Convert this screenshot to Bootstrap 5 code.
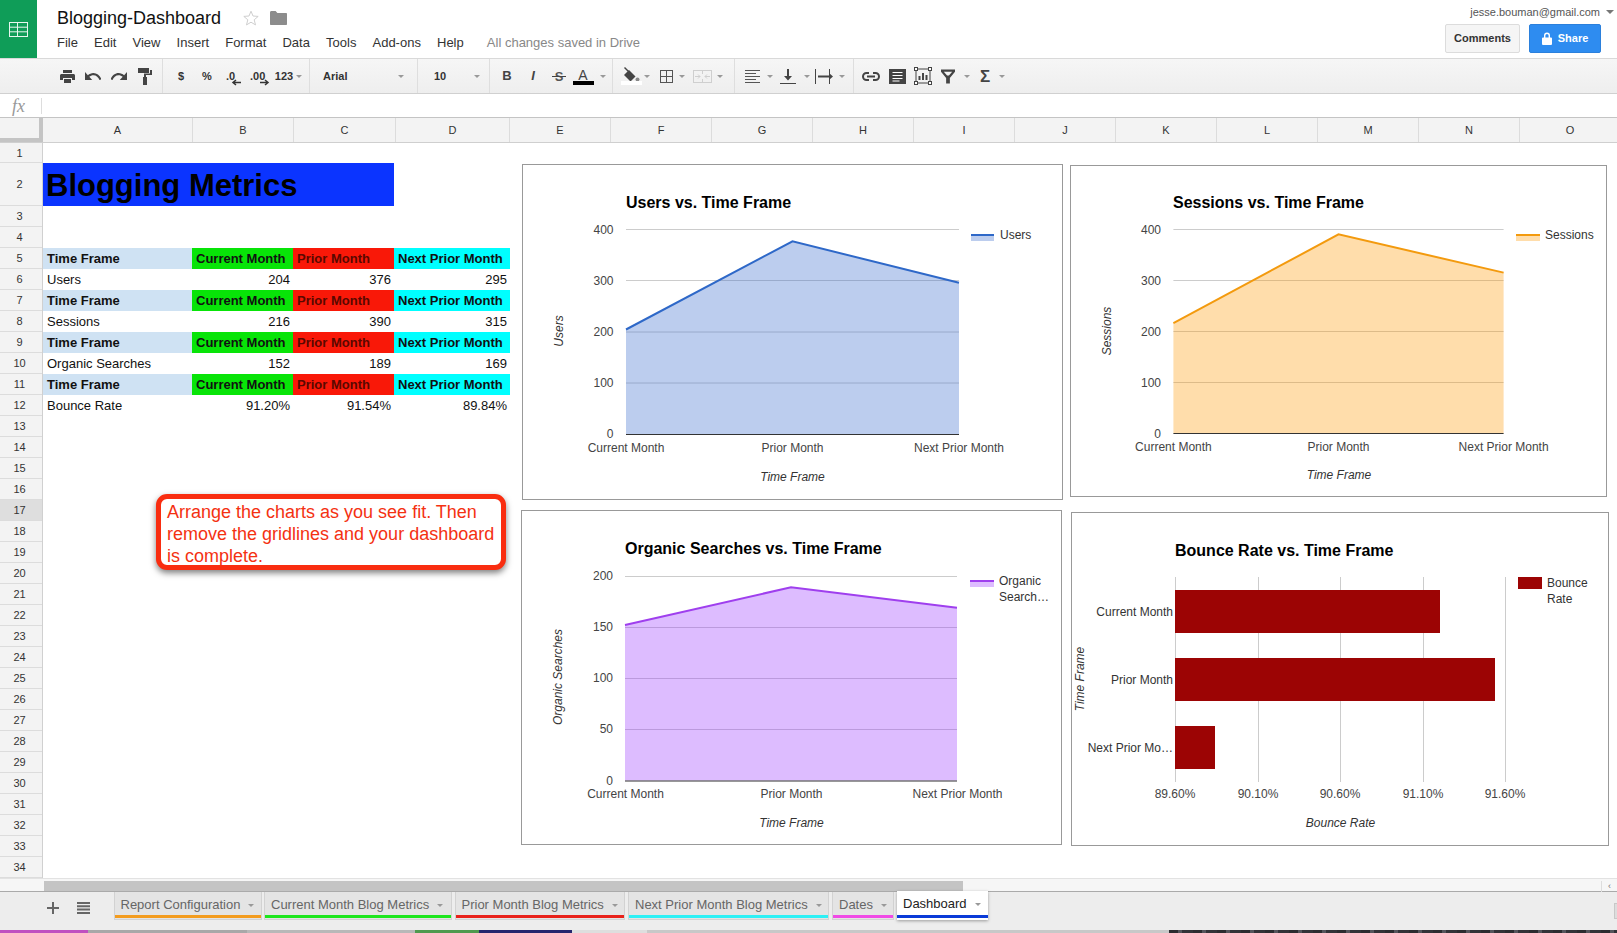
<!DOCTYPE html>
<html lang="en">
<head>
<meta charset="utf-8">
<title>Blogging-Dashboard</title>
<link rel="stylesheet" href="https://cdn.jsdelivr.net/npm/bootstrap@5.3.0/dist/css/bootstrap.min.css">
<style>
html,body{margin:0;height:933px;overflow:hidden}
body{width:1617px;font-family:"Liberation Sans",Arial,sans-serif;color:#222;background:#fff;font-size:13px}
svg{display:block}
svg text{font-family:"Liberation Sans",Arial,sans-serif}

/* title bar */
.app-head{height:58px}
.app-logo{width:37px;height:58px;background:#0f9d58}
.app-titles{padding-left:20px}
.doc-title{font-size:18px;line-height:36px;height:36px;color:#111}
.doc-title-icons{margin-left:22px;gap:11px}
.menu-line{height:14px;line-height:14px;font-size:13px}
.menu-link{padding:0;margin-right:16.1px;color:#333;font-size:13px;line-height:14px}
.save-state{color:#888;margin-left:7px}
.acct-email{height:24px;padding:1px 3px 0 0;font-size:11px;line-height:22px;color:#555}
.acct-caret{display:inline-block;margin-left:6px;vertical-align:2px;border:4px solid transparent;border-top-color:#777;border-bottom:0}
.acct-btns{gap:9px;padding-right:16px}
.act-btn{height:29px;font-size:11px;font-weight:700;padding:0;border-radius:2px;line-height:27px}
.act-btn-c{width:75px;background:#f5f5f5;border:1px solid #dcdcdc;color:#333}
.act-btn-s{width:72px;background:#2e8cf0;border:1px solid #2b80dc;color:#fff;gap:6px}

/* toolbar */
.tool-row{height:36px;background:linear-gradient(#f6f6f6,#eeeeee);border-top:1px solid #d9d9d9;border-bottom:1px solid #d0d0d0;color:#444}
.tg{height:100%;border-right:1px solid #dedede}
.tg1{width:163px;padding-left:54px}
.tg2{width:147px;padding-left:5px}
.tg3{width:108px;padding:0 11px 0 13px}
.tg4{width:72px;padding:0 7px 0 16px}
.tg5{width:123px;padding-left:4px}
.tg6{width:122px;padding-left:4px}
.tg7{width:119px;padding-left:5px}
.tg8{padding-left:4px;border-right:0}
.ti{width:26px;flex:none}
.ti-24{width:24px;flex:none}
.ti-w{width:26px;flex:none}
.tc{width:8px;flex:none;height:100%}
.tc::after{content:"";border:3px solid transparent;border-top-color:#999;border-bottom:0}
.sp-1{margin-left:1px}.sp-2{margin-left:2px}.sp-3{margin-left:3px}.sp-4{margin-left:4px}.sn-1{margin-left:-1px}.sn-2{margin-left:-2px}
.tt{font-size:11px;font-weight:700;color:#333}
.tt-r{font-weight:700;font-size:13px;color:#444;line-height:14px}
.ti-big{font-size:17px;font-weight:700;color:#444;line-height:1}
.ta-bar{width:21px;height:4px;background:#000;margin-top:-1px}
.ta-letter{font-size:14px;line-height:14px;color:#444}
.tf-name{font-size:11px;font-weight:700;color:#333}

/* formula bar */
.fx-row{height:24px;border-bottom:1px solid #c4c4c4}
.fx-mark{width:41px;font-family:"Liberation Serif",serif;font-style:italic;font-size:18px;color:#999;padding-left:12px;line-height:24px}
.fx-sep{width:1px;height:16px;background:#ddd;margin-top:4px}

/* columns */
.col-row{height:25px;background:#f3f3f3;border-bottom:1px solid #cfcfcf;overflow:hidden}
.col-corner{width:43px;flex:none;height:25px;background:#f3f3f3;border-right:4px solid #c4c4c4;border-bottom:5px solid #c4c4c4}
.col-h{flex:none;width:101px;border-right:1px solid #dcdcdc;text-align:center;font-size:11px;line-height:25px;color:#333}
.col-h-a{width:150px}.col-h-c{width:102px}.col-h-d{width:114px}

/* grid */
.sheet-body{height:735px}
.row-rail{width:43px;flex:none;background:#f3f3f3;border-right:1px solid #d0d0d0}
.row-n{height:21px;border-bottom:1px solid #dcdcdc;font-size:11px;color:#333;line-height:20px;text-align:center;padding-right:3px}
.row-n-1{height:20px}.row-n-2{height:43px;line-height:42px}
.row-n-on{background:#dedede}
.sheet-canvas{flex:1;min-width:0}
.sheet-tbl{table-layout:fixed;width:467px;border-collapse:collapse;font-size:13px}
.sheet-tbl td{height:21px;padding:0 3px 0 4px;line-height:20px;overflow:hidden;white-space:nowrap;color:#111}
.sheet-tbl tr.tr-1 td{height:20px}
.sheet-tbl tr.tr-2 td{height:43px}
.cw-a{width:149px}.cw-b{width:101px}.cw-c{width:101px}.cw-d{width:116px}
.sheet-tbl td.cell-title{background:#0b34ff;font-size:31px;font-weight:700;color:#000;padding-top:2px;padding-left:3px}
.cell-tf{background:#cfe2f3;font-weight:700}
.cell-cur{background:#08e408;font-weight:700}
.sheet-tbl td.cell-pri{background:#f91808;font-weight:700;color:#5a0800}
.cell-nxt{background:#0ff;font-weight:700}

/* charts */
.chart-box{position:absolute;background:#fff;border:1px solid #999}
.chart-1{left:479px;top:21px;width:541px;height:336px}
.chart-2{left:1027px;top:22px;width:537px;height:332px}
.chart-3{left:478px;top:367px;width:541px;height:335px}
.chart-4{left:1028px;top:369px;width:538px;height:334px}
.c-title{font-size:16px;font-weight:700;fill:#000}
.c-tick{font-size:12px;fill:#444}
.c-leg{font-size:12px;fill:#333}
.c-ax{font-size:12px;font-style:italic;fill:#333}
.c-grid{stroke:#ccc;stroke-width:1}
.c-base{stroke:#333;stroke-width:1}
.c-end{text-anchor:end}
.c-mid{text-anchor:middle}

/* note */
.note-box{position:absolute;left:113px;top:351px;width:350px;height:76px;background:#fff;border:5px solid #f92d10;border-radius:11px;box-shadow:0 3px 6px rgba(0,0,0,.5);color:#f43112;font-size:18px;line-height:22px;padding:2px 0 0 6px;white-space:nowrap}

/* scroll + tabs */
.scroll-row{height:13px;background:#f6f6f6;border-top:1px solid #e2e2e2;padding:2px 0 0 44px}
.scroll-thumb{width:919px;height:10px;background:#c4c4c4}
.scroll-end{width:16px;height:11px;border-left:1px solid #ddd;color:#777;font-size:9px;line-height:10px;text-align:center}
.tab-row{height:39px;background:#ededed;border-top:1px solid #aaa}
.tab-tools{width:113.5px;flex:none;height:32px}
.tab-plus{margin-left:47px}
.tab-menu{margin-left:18px}
.stab{flex:none;height:28px;margin-right:3px;background:#e4e4e4;border:1px solid #d2d2d2;border-top:0;font-size:13px;color:#666;padding:4px 0 0 6px;position:relative;line-height:18px;white-space:nowrap}
.stab-caret{display:inline-block;margin:0 0 0 8px;vertical-align:2px;border:3.5px solid transparent;border-top-color:#999;border-bottom:0}
.stab-bar{position:absolute;left:0;right:0;bottom:1px;height:3px}
.stab-on{background:#fff;color:#222;border:0;box-shadow:0 1px 3px rgba(0,0,0,.35);padding-top:4px;margin-top:-1px;height:29px}
.stab-on .stab-bar{bottom:2px}
.bar-o{background:#f39c1f}.bar-g{background:#1ee61e}.bar-r{background:#e8211a}.bar-c{background:#2ef0f5}.bar-m{background:#f04ae6}.bar-b{background:#0b3bd8}
.tab-w-1{width:148.5px;margin-right:2px}.tab-w-2{width:187.5px}.tab-w-3{width:170.5px}.tab-w-4{width:201px}.tab-w-5{width:62px}.tab-w-6{width:91px}
.tab-stub{width:3px;height:16px;background:#ddd;border:1px solid #c8c8c8;border-right:0;margin-top:11px}

/* screen edge */
.edge-row{height:3px}
.eg-1{width:88px;background:#c050c0}.eg-2{width:159px;background:#a8a8a8}.eg-3{width:168px;background:#b8b8b8}.eg-4{width:64px;background:#4f9a4f}.eg-5{width:93px;background:#25256e}.eg-6{width:75px;background:#dedede}.eg-7{width:522px;background:#c8c8c8}.eg-8{flex:1;background:repeating-linear-gradient(90deg,#2c2c30 0 9px,#55555c 9px 13px,#333338 13px 24px)}
</style>
</head>
<body>

<header class="app-head d-flex">
  <div class="app-logo d-flex align-items-center justify-content-center">
    <svg width="19" height="15" viewBox="0 0 19 15" fill="none" stroke="#e6f6ee" stroke-width="1"><rect x=".5" y=".5" width="18" height="14"/><path d="M.5 5.200h18M.5 9.800h18M8.500 .5v14"/></svg>
  </div>
  <div class="app-titles flex-grow-1">
    <div class="doc-title d-flex align-items-center">Blogging-Dashboard
      <div class="doc-title-icons d-flex align-items-center">
        <svg width="16" height="16" viewBox="0 0 16 16" fill="none" stroke="#cfcfcf"><path d="M8 1.200l2 4.800 5.200.4-4 3.400 1.300 5.100L8 12.200l-4.500 2.700 1.300-5.100-4-3.400L6 6z"/></svg>
        <svg width="17" height="14" viewBox="0 0 17 14" fill="#8c8c8c"><path d="M0 1.500C0 .7.6 0 1.400 0h4.200l1.800 2H16c.6 0 1 .4 1 1v10c0 .6-.4 1-1 1H1c-.6 0-1-.4-1-1z"/></svg>
      </div>
    </div>
    <nav class="nav menu-line">
      <a class="nav-link menu-link" href="#">File</a>
      <a class="nav-link menu-link" href="#">Edit</a>
      <a class="nav-link menu-link" href="#">View</a>
      <a class="nav-link menu-link" href="#">Insert</a>
      <a class="nav-link menu-link" href="#">Format</a>
      <a class="nav-link menu-link" href="#">Data</a>
      <a class="nav-link menu-link" href="#">Tools</a>
      <a class="nav-link menu-link" href="#">Add-ons</a>
      <a class="nav-link menu-link" href="#">Help</a>
      <span class="save-state">All changes saved in Drive</span>
    </nav>
  </div>
  <div class="d-flex flex-column align-items-end">
    <div class="acct-email">jesse.bouman@gmail.com<span class="acct-caret"></span></div>
    <div class="acct-btns d-flex">
      <button type="button" class="btn act-btn act-btn-c">Comments</button>
      <button type="button" class="btn act-btn act-btn-s d-flex align-items-center justify-content-center">
        <svg width="10" height="13" viewBox="0 0 10 13" fill="#fff"><path d="M1 5.500h1V3.600a3 3 0 0 1 6 0v1.900h1a1 1 0 0 1 1 1V12a1 1 0 0 1-1 1H1a1 1 0 0 1-1-1V6.500a1 1 0 0 1 1-1zM3.400 5.500h3.200V3.600a1.600 1.600 0 0 0-3.200 0z"/></svg>
        Share</button>
    </div>
  </div>
</header>

<div class="tool-row d-flex">
  <div class="tg tg1 d-flex align-items-center">
    <div class="ti d-flex justify-content-center"><svg width="15" height="13" viewBox="0 0 15 13" fill="#444"><path d="M3 0h9v3H3zM1.500 4h12c.8 0 1.500.7 1.500 1.500V10h-3V8H3v2H0V5.500C0 4.700.7 4 1.500 4zM4 9h7v4H4z"/></svg></div>
    <div class="ti d-flex justify-content-center"><svg width="16" height="9" viewBox="2 7 20 10" fill="#444" preserveAspectRatio="none"><path d="M12.500 8c-2.650 0-5.050.99-6.900 2.600L2 7v9h9l-3.620-3.620c1.390-1.160 3.160-1.880 5.120-1.880 3.540 0 6.550 2.310 7.600 5.500l2.370-.78C21.080 11.030 17.150 8 12.500 8z"/></svg></div>
    <div class="ti d-flex justify-content-center"><svg width="16" height="9" viewBox="2 7 20 10" fill="#444" preserveAspectRatio="none"><path d="M18.400 10.600C16.550 8.990 14.150 8 11.500 8c-4.650 0-8.580 3.030-9.960 7.220L3.900 16c1.050-3.190 4.050-5.500 7.600-5.500 1.950 0 3.730.72 5.120 1.880L13 16h9V7l-3.600 3.600z"/></svg></div>
    <div class="ti d-flex justify-content-center"><svg width="14" height="17" viewBox="0 0 14 17" fill="#444"><path d="M0 0h11v5H0zM12 2h2v5H8v2h1v8H5V9h1V5.500h6z"/></svg></div>
  </div>
  <div class="tg tg2 d-flex align-items-center">
    <div class="ti text-center tt">$</div>
    <div class="ti text-center tt">%</div>
    <div class="ti d-flex justify-content-center"><svg width="24" height="20" viewBox="0 0 24 20"><text x="5" y="13.500" font-size="11" font-weight="700" fill="#333">.0</text><path d="M12 16.500h8M15 14l-3 2.500 3 2.500" stroke="#333" stroke-width="1.500" fill="none"/></svg></div>
    <div class="ti d-flex justify-content-center"><svg width="24" height="20" viewBox="0 0 24 20"><text x="3" y="13.500" font-size="11" font-weight="700" fill="#333">.00</text><path d="M13 16.500h8M18 14l3 2.500-3 2.500" stroke="#333" stroke-width="1.500" fill="none"/></svg></div>
    <div class="ti-24 text-center tt">123</div>
    <div class="tc d-flex align-items-center"></div>
  </div>
  <div class="tg tg3 d-flex align-items-center justify-content-between">
    <span class="tf-name">Arial</span><div class="tc d-flex align-items-center"></div>
  </div>
  <div class="tg tg4 d-flex align-items-center justify-content-between">
    <span class="tf-name">10</span><div class="tc d-flex align-items-center"></div>
  </div>
  <div class="tg tg5 d-flex align-items-center">
    <div class="ti text-center tt-r">B</div>
    <div class="ti text-center tt-r fst-italic">I</div>
    <div class="ti d-flex justify-content-center"><svg width="14" height="14" viewBox="0 0 14 14"><text x="7" y="11.500" text-anchor="middle" font-size="13" font-weight="700" fill="#555">S</text><path d="M0 7.500h14" stroke="#444"/></svg></div>
    <div class="ti d-flex flex-column align-items-center sn-2"><span class="ta-letter">A</span><span class="ta-bar"></span></div>
    <div class="tc d-flex align-items-center sp-4"></div>
  </div>
  <div class="tg tg6 d-flex align-items-center">
    <div class="ti d-flex flex-column align-items-center sp-1">
      <svg width="18" height="15" viewBox="0 0 18 15" fill="#444"><path d="M3 0l4 4-1 1-4-4z"/><path d="M7 3l6.500 6.500-5 5L2 8z"/><circle cx="15.500" cy="12.500" r="2" fill="#888"/></svg>
      <span class="ta-bar bg-white"></span>
    </div>
    <div class="tc d-flex align-items-center"></div>
    <div class="ti-24 d-flex justify-content-center sp-2"><svg width="13" height="13" viewBox="0 0 13 13" fill="none" stroke="#555"><rect x=".5" y=".5" width="12" height="12"/><path d="M6.500 0v13M0 6.500h13"/></svg></div>
    <div class="tc d-flex align-items-center sp-1"></div>
    <div class="ti-w d-flex justify-content-center sp-2"><svg width="19" height="13" viewBox="0 0 19 13" fill="none" stroke="#cfcfcf"><rect x=".5" y=".5" width="18" height="12"/><path d="M9.500 0v4M9.500 9v4M2 6.500h5M5 4.500l2 2-2 2M17 6.500h-5M14 4.500l-2 2 2 2"/></svg></div>
    <div class="tc d-flex align-items-center sp-2"></div>
  </div>
  <div class="tg tg7 d-flex align-items-center">
    <div class="ti-24 d-flex justify-content-center"><svg width="15" height="13" viewBox="0 0 15 13" stroke="#555"><path d="M0 .5h15M0 3.500h11M0 6.500h15M0 9.500h11M0 12.500h15"/></svg></div>
    <div class="tc d-flex align-items-center sp-3"></div>
    <div class="ti-24 d-flex justify-content-center sp-1"><svg width="16" height="15" viewBox="0 0 16 15" fill="#444"><path d="M7 0h2v7h3l-4 4.500L4 7h3zM0 14h16v1H0z"/></svg></div>
    <div class="tc d-flex align-items-center sp-4"></div>
    <div class="ti-w d-flex justify-content-center"><svg width="21" height="15" viewBox="0 0 21 15" fill="#444"><path d="M0 0h1v15H0zM14 0h1v15h-1zM3 6.500h11V4l4 3.500-4 3.500V8.500H3z"/></svg></div>
    <div class="tc d-flex align-items-center sp-1"></div>
  </div>
  <div class="tg tg8 d-flex align-items-center">
    <div class="ti d-flex justify-content-center"><svg width="18" height="9" viewBox="0 0 18 9" fill="none" stroke="#444" stroke-width="2"><path d="M7 1H4.500a3.500 3.500 0 0 0 0 7H7M11 1h2.500a3.500 3.500 0 0 1 0 7H11M5 4.500h8"/></svg></div>
    <div class="ti d-flex justify-content-center"><svg width="17" height="15" viewBox="0 0 17 15"><rect width="17" height="15" fill="#444"/><path d="M3.500 3.500h10M3.500 6.500h10M3.500 9.500h10M3.500 12h7" stroke="#fff"/></svg></div>
    <div class="ti d-flex justify-content-center"><svg width="18" height="18" viewBox="0 0 18 18" fill="none" stroke="#444"><rect x="2" y="2" width="14" height="14"/><path d="M5.500 13V9M9 13V6M12.500 13V8" stroke-width="2"/><g fill="#fff"><rect x=".5" y=".5" width="3" height="3"/><rect x="14.500" y=".5" width="3" height="3"/><rect x=".5" y="14.500" width="3" height="3"/><rect x="14.500" y="14.500" width="3" height="3"/></g></svg></div>
    <div class="ti d-flex justify-content-center sn-1"><svg width="14" height="15" viewBox="0 0 15 15" fill="#444"><path d="M0 0h15v2.500L9.500 9v6h-4V9L0 2.500zM3 2.500l3.500 4h2l3.500-4z"/></svg></div>
    <div class="tc d-flex align-items-center sp-3"></div>
    <div class="ti text-center ti-big">Σ</div>
    <div class="tc d-flex align-items-center sp-1"></div>
  </div>
</div>

<div class="fx-row d-flex">
  <div class="fx-mark">fx</div><div class="fx-sep"></div>
</div>

<div class="col-row d-flex">
  <div class="col-corner"></div>
  <div class="col-h col-h-a">A</div><div class="col-h">B</div><div class="col-h col-h-c">C</div><div class="col-h col-h-d">D</div>
  <div class="col-h">E</div><div class="col-h">F</div><div class="col-h">G</div><div class="col-h">H</div><div class="col-h">I</div><div class="col-h">J</div><div class="col-h">K</div><div class="col-h">L</div><div class="col-h">M</div><div class="col-h">N</div><div class="col-h">O</div>
</div>

<main class="sheet-body d-flex">
  <div class="row-rail">
    <div class="row-n row-n-1">1</div><div class="row-n row-n-2">2</div><div class="row-n">3</div><div class="row-n">4</div><div class="row-n">5</div><div class="row-n">6</div><div class="row-n">7</div><div class="row-n">8</div><div class="row-n">9</div><div class="row-n">10</div><div class="row-n">11</div><div class="row-n">12</div><div class="row-n">13</div><div class="row-n">14</div><div class="row-n">15</div><div class="row-n">16</div><div class="row-n row-n-on">17</div><div class="row-n">18</div><div class="row-n">19</div><div class="row-n">20</div><div class="row-n">21</div><div class="row-n">22</div><div class="row-n">23</div><div class="row-n">24</div><div class="row-n">25</div><div class="row-n">26</div><div class="row-n">27</div><div class="row-n">28</div><div class="row-n">29</div><div class="row-n">30</div><div class="row-n">31</div><div class="row-n">32</div><div class="row-n">33</div><div class="row-n">34</div>
  </div>
  <div class="sheet-canvas position-relative">
    <table class="sheet-tbl">
      <colgroup><col class="cw-a"><col class="cw-b"><col class="cw-c"><col class="cw-d"></colgroup>
      <tr class="tr-1"><td></td><td></td><td></td><td></td></tr>
      <tr class="tr-2"><td colspan="3" class="cell-title">Blogging Metrics</td><td></td></tr>
      <tr><td></td><td></td><td></td><td></td></tr>
      <tr><td></td><td></td><td></td><td></td></tr>
      <tr><td class="cell-tf">Time Frame</td><td class="cell-cur">Current Month</td><td class="cell-pri">Prior Month</td><td class="cell-nxt">Next Prior Month</td></tr>
      <tr><td>Users</td><td class="text-end">204</td><td class="text-end">376</td><td class="text-end">295</td></tr>
      <tr><td class="cell-tf">Time Frame</td><td class="cell-cur">Current Month</td><td class="cell-pri">Prior Month</td><td class="cell-nxt">Next Prior Month</td></tr>
      <tr><td>Sessions</td><td class="text-end">216</td><td class="text-end">390</td><td class="text-end">315</td></tr>
      <tr><td class="cell-tf">Time Frame</td><td class="cell-cur">Current Month</td><td class="cell-pri">Prior Month</td><td class="cell-nxt">Next Prior Month</td></tr>
      <tr><td>Organic Searches</td><td class="text-end">152</td><td class="text-end">189</td><td class="text-end">169</td></tr>
      <tr><td class="cell-tf">Time Frame</td><td class="cell-cur">Current Month</td><td class="cell-pri">Prior Month</td><td class="cell-nxt">Next Prior Month</td></tr>
      <tr><td>Bounce Rate</td><td class="text-end">91.20%</td><td class="text-end">91.54%</td><td class="text-end">89.84%</td></tr>
    </table>

    <div class="note-box">Arrange the charts as you see fit. Then<br>remove the gridlines and your dashboard<br>is complete.</div>

    <div class="chart-box chart-1">
      <svg width="539" height="334" viewBox="523 165 539 334">
        <text class="c-title" x="626" y="208">Users vs. Time Frame</text>
        <path class="c-grid" d="M626 229.500h333M626 280.500h333M626 332h333M626 383h333"/>
        <path d="M626 329.500L792.500 241.300 959 282.800V434H626z" fill="#3366cc" fill-opacity=".33"/>
        <path d="M626 329.500L792.500 241.300 959 282.800" fill="none" stroke="#2e68c8" stroke-width="2"/>
        <path class="c-base" d="M626 434.500h333"/>
        <g class="c-tick c-end"><text x="613.500" y="233.500">400</text><text x="613.500" y="285">300</text><text x="613.500" y="336">200</text><text x="613.500" y="387">100</text><text x="613.500" y="438">0</text></g>
        <g class="c-tick c-mid"><text x="626" y="452">Current Month</text><text x="792.500" y="452">Prior Month</text><text x="959" y="452">Next Prior Month</text></g>
        <text class="c-ax c-mid" x="792.500" y="481">Time Frame</text>
        <text class="c-ax c-mid" x="563" y="331" transform="rotate(-90 563 331)">Users</text>
        <rect x="971" y="234" width="23" height="7" fill="#3366cc" fill-opacity=".33"/><rect x="971" y="234" width="23" height="2" fill="#2e68c8"/>
        <text class="c-leg" x="1000" y="239">Users</text>
      </svg>
    </div>

    <div class="chart-box chart-2">
      <svg width="535" height="330" viewBox="1071 166 535 330">
        <text class="c-title" x="1173" y="208">Sessions vs. Time Frame</text>
        <path class="c-grid" d="M1173.400 229.500h330.200M1173.400 280.500h330.200M1173.400 331.500h330.200M1173.400 382.500h330.200"/>
        <path d="M1173.400 323.100L1338.500 234.400 1503.600 272.600V433.300H1173.400z" fill="#ff9900" fill-opacity=".33"/>
        <path d="M1173.400 323.100L1338.500 234.400 1503.600 272.600" fill="none" stroke="#f39a0e" stroke-width="2"/>
        <path class="c-base" d="M1173.400 433.500h330.200"/>
        <g class="c-tick c-end"><text x="1161" y="234">400</text><text x="1161" y="285">300</text><text x="1161" y="336">200</text><text x="1161" y="387">100</text><text x="1161" y="438">0</text></g>
        <g class="c-tick c-mid"><text x="1173.400" y="451">Current Month</text><text x="1338.500" y="451">Prior Month</text><text x="1503.600" y="451">Next Prior Month</text></g>
        <text class="c-ax c-mid" x="1339" y="479">Time Frame</text>
        <text class="c-ax c-mid" x="1110.500" y="331" transform="rotate(-90 1110.500 331)">Sessions</text>
        <rect x="1516" y="234" width="24" height="7" fill="#ff9900" fill-opacity=".33"/><rect x="1516" y="234" width="24" height="2" fill="#f39a0e"/>
        <text class="c-leg" x="1545" y="239">Sessions</text>
      </svg>
    </div>

    <div class="chart-box chart-3">
      <svg width="539" height="333" viewBox="522 511 539 333">
        <text class="c-title" x="625" y="554">Organic Searches vs. Time Frame</text>
        <path class="c-grid" d="M625 576.500h332M625 627.500h332M625 678.500h332M625 729.500h332"/>
        <path d="M625 625L791 587.300 957 607.700V780.500H625z" fill="#9933ff" fill-opacity=".33"/>
        <path d="M625 625L791 587.300 957 607.700" fill="none" stroke="#9f3fee" stroke-width="2"/>
        <path class="c-base" d="M625 781h332"/>
        <g class="c-tick c-end"><text x="613" y="580">200</text><text x="613" y="631">150</text><text x="613" y="682">100</text><text x="613" y="733">50</text><text x="613" y="785">0</text></g>
        <g class="c-tick c-mid"><text x="625.500" y="798">Current Month</text><text x="791.500" y="798">Prior Month</text><text x="957.500" y="798">Next Prior Month</text></g>
        <text class="c-ax c-mid" x="791.500" y="826.500">Time Frame</text>
        <text class="c-ax c-mid" x="562" y="677" transform="rotate(-90 562 677)">Organic Searches</text>
        <rect x="970" y="580" width="24" height="7" fill="#9933ff" fill-opacity=".33"/><rect x="970" y="580" width="24" height="2" fill="#9f3fee"/>
        <text class="c-leg" x="999" y="585">Organic</text><text class="c-leg" x="999" y="601">Search…</text>
      </svg>
    </div>

    <div class="chart-box chart-4">
      <svg width="536" height="332" viewBox="1072 513 536 332">
        <text class="c-title" x="1175" y="556">Bounce Rate vs. Time Frame</text>
        <path class="c-grid" d="M1175.500 577v205M1258.500 577v205M1340.500 577v205M1423.500 577v205M1505.500 577v205"/>
        <g fill="#9c0404"><rect x="1175" y="590" width="265" height="43"/><rect x="1175" y="658" width="320" height="43"/><rect x="1175" y="726" width="40" height="43"/></g>
        <g class="c-leg c-end"><text x="1173" y="616">Current Month</text><text x="1173" y="684">Prior Month</text><text x="1173" y="752">Next Prior Mo…</text></g>
        <g class="c-tick c-mid"><text x="1175" y="798">89.60%</text><text x="1258" y="798">90.10%</text><text x="1340" y="798">90.60%</text><text x="1423" y="798">91.10%</text><text x="1505" y="798">91.60%</text></g>
        <text class="c-ax c-mid" x="1340.500" y="827">Bounce Rate</text>
        <text class="c-ax c-mid" x="1084" y="679" transform="rotate(-90 1084 679)">Time Frame</text>
        <rect x="1518" y="577" width="24" height="12" fill="#9c0404"/>
        <text class="c-leg" x="1547" y="587">Bounce</text><text class="c-leg" x="1547" y="603">Rate</text>
      </svg>
    </div>
  </div>
</main>

<div class="scroll-row d-flex justify-content-between">
  <div class="scroll-thumb"></div>
  <div class="scroll-end">‹</div>
</div>

<footer class="tab-row d-flex">
  <div class="tab-tools d-flex align-items-center">
    <svg class="tab-plus" width="12" height="12" viewBox="0 0 12 12" fill="#666"><path d="M5 0h2v5h5v2H7v5H5V7H0V5h5z"/></svg>
    <svg class="tab-menu" width="13" height="12" viewBox="0 0 13 12" fill="#666"><path d="M0 0h13v2H0zM0 3.300h13v2H0zM0 6.600h13v2H0zM0 10h13v2H0z"/></svg>
  </div>
  <div class="stab tab-w-1">Report Configuration<span class="stab-caret"></span><span class="stab-bar bar-o"></span></div>
  <div class="stab tab-w-2">Current Month Blog Metrics<span class="stab-caret"></span><span class="stab-bar bar-g"></span></div>
  <div class="stab tab-w-3">Prior Month Blog Metrics<span class="stab-caret"></span><span class="stab-bar bar-r"></span></div>
  <div class="stab tab-w-4">Next Prior Month Blog Metrics<span class="stab-caret"></span><span class="stab-bar bar-c"></span></div>
  <div class="stab tab-w-5">Dates<span class="stab-caret"></span><span class="stab-bar bar-m"></span></div>
  <div class="stab stab-on tab-w-6">Dashboard<span class="stab-caret"></span><span class="stab-bar bar-b"></span></div>
  <div class="tab-stub ms-auto"></div>
</footer>

<div class="edge-row d-flex">
  <div class="eg-1"></div><div class="eg-2"></div><div class="eg-3"></div><div class="eg-4"></div><div class="eg-5"></div><div class="eg-6"></div><div class="eg-7"></div><div class="eg-8"></div>
</div>

</body>
</html>
